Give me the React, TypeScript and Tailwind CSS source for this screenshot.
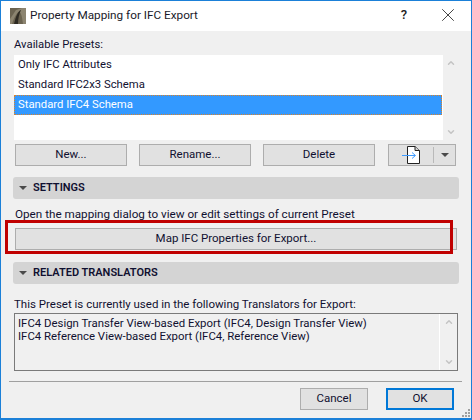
import { ChevronDown, ChevronUp, X } from 'lucide-react';

const font = { fontFamily: 'Roboto, "Open Sans", sans-serif' };

function Btn({ label, className }: { label: string; className: string }) {
  return (
    <button className={`h-[22px] border border-[#adadad] bg-[#e1e1e1] text-[11.5px] leading-none text-[#101030] ${className}`}>
      {label}
    </button>
  );
}

function Arrow() {
  return <span className="w-0 h-0 border-x-[4px] border-x-transparent border-t-[4px] border-t-[#4a4a4a]" />;
}

function SectionHeader({ title }: { title: string }) {
  return (
    <div className="ml-[12px] w-[446px] h-[22px] rounded-[3px] bg-[#d4d4d4] flex items-center pl-[6px] gap-[6px]">
      <Arrow />
      <span className="text-[11px] font-semibold text-[#101030]">{title}</span>
    </div>
  );
}

function Scroll({ className }: { className: string }) {
  return (
    <div className={`flex flex-col items-center justify-between text-[#c4c4c4] ${className}`}>
      <ChevronUp size={10} strokeWidth={3.5} />
      <ChevronDown size={10} strokeWidth={3.5} />
    </div>
  );
}

export default function App() {
  return (
    <div style={font} className="relative w-[472px] h-[420px] border border-[#1b80d8] border-b-2 bg-[#f0f0f0] overflow-hidden text-[11.5px] text-[#101030]">
      {/* title bar */}
      <div className="h-[30px] bg-white flex items-center pl-[9px]">
        <svg width="16" height="16" viewBox="0 0 16 16" className="shrink-0">
          <rect width="16" height="16" fill="#6b6350" />
          <path d="M0 16 L0 11 L6 2 L12 0 L16 0 L16 16 L13 16 C12 8 11 4 9 4 C7 4 4 10 2 16 Z" fill="#8c8470" />
          <path d="M4 16 C6 8 8 3 11 2 C9 6 8 11 8 16 Z" fill="#2e2a22" />
        </svg>
        <span className="ml-[4px] text-[11.75px] text-[#1a1a2a]">Property Mapping for IFC Export</span>
        <span className="ml-auto mr-[30px] mb-[2px] text-[13px] font-medium text-[#222]">?</span>
        <X size={22} strokeWidth={0.8} className="mr-[12px] mb-[2px] text-black" />
      </div>

      <div className="pl-[13px] pt-[5px] h-[24px] leading-[18px] text-[11.3px]">Available Presets:</div>

      {/* presets list */}
      <div className="ml-[13px] flex h-[85px] w-[445px]">
        <div className="w-[429px] bg-white text-[11.3px]">
          <div className="h-[20px] pl-[4px] leading-[20px]">Only IFC Attributes</div>
          <div className="h-[20px] pl-[4px] leading-[20px]">Standard IFC2x3 Schema</div>
          <div className="h-[20px] pl-[3px] leading-[18px] w-[428px] bg-[#3399ff] text-white border border-dotted border-[#d9822b]">
            Standard IFC4 Schema
          </div>
        </div>
        <Scroll className="w-[16px] py-[3px]" />
      </div>

      {/* preset buttons */}
      <div className="flex mt-[4px] ml-[14px] h-[22px]">
        <Btn label="New..." className="w-[112px]" />
        <Btn label="Rename..." className="w-[112px] ml-[12px]" />
        <Btn label="Delete" className="w-[112px] ml-[12px]" />
        <div className="ml-[13px] w-[68px] h-[22px] border border-[#adadad] bg-[#e1e1e1] flex items-center">
          <svg width="24" height="20" viewBox="0 0 24 20" className="ml-[12px] shrink-0">
            <path d="M6.5 1.5 H14 L18.5 5.5 V18.5 H6.5 Z" fill="#fff" stroke="#222" strokeWidth="1" />
            <path d="M14 1.5 V5.5 H18.5" fill="#cfcfcf" stroke="#222" strokeWidth="1" />
            <path d="M1 10.5 H14 M11 7.5 L14.5 10.5 L11 13.5" fill="none" stroke="#3f9bff" strokeWidth="1" />
          </svg>
          <span className="ml-[8px] w-px h-[16px] bg-[#b9b9b9]" />
          <span className="ml-[7px] flex"><Arrow /></span>
        </div>
      </div>

      <div className="mt-[11px]"><SectionHeader title="SETTINGS" /></div>

      <div className="pl-[14px] h-[29px] pt-[6px] leading-[18px] text-[11.7px]">Open the mapping dialog to view or edit settings of current Preset</div>

      <Btn label="Map IFC Properties for Export..." className="ml-[14px] w-[442px] block" />

      <div className="mt-[12px]"><SectionHeader title="RELATED TRANSLATORS" /></div>

      <div className="pl-[13px] pt-[11px] h-[29px] leading-[18px]">This Preset is currently used in the following Translators for Export:</div>

      {/* translators box */}
      <div className="ml-[13px] w-[444px] h-[58px] border border-[#7a7a7a] flex">
        <div className="flex-1 pl-[3px] pt-[3px] text-[11.4px]">
          <div className="h-[13px] leading-[13px]">IFC4 Design Transfer View-based Export (IFC4, Design Transfer View)</div>
          <div className="h-[13px] leading-[13px]">IFC4 Reference View-based Export (IFC4, Reference View)</div>
        </div>
        <Scroll className="w-[18px] border-l border-white py-[3px]" />
      </div>

      <div className="ml-[8px] w-[453px] mt-[10px] border-t border-[#a0a0a0]" />

      {/* footer */}
      <div className="flex justify-end mt-[6px] pr-[17px] items-center">
        <Btn label="Cancel" className="w-[68px]" />
        <button className="ml-[18px] w-[68px] h-[22px] border-2 border-[#0078d7] bg-[#e1e1e1] text-[11.5px] leading-none text-[#101030]">OK</button>
      </div>

      {/* resize grip */}
      <div className="absolute right-[1px] bottom-[1px] grid grid-cols-3 gap-px w-[8px] h-[8px]">
        <span /><span /><span className="bg-[#a0a0a0]" />
        <span /><span className="bg-[#a0a0a0]" /><span className="bg-[#a0a0a0]" />
        <span className="bg-[#a0a0a0]" /><span className="bg-[#a0a0a0]" /><span className="bg-[#a0a0a0]" />
      </div>

      {/* red highlight around the map button */}
      <div className="absolute left-[4px] top-[219px] w-[448px] h-[34px] border-[3px] border-[#c00000]" />
    </div>
  );
}
